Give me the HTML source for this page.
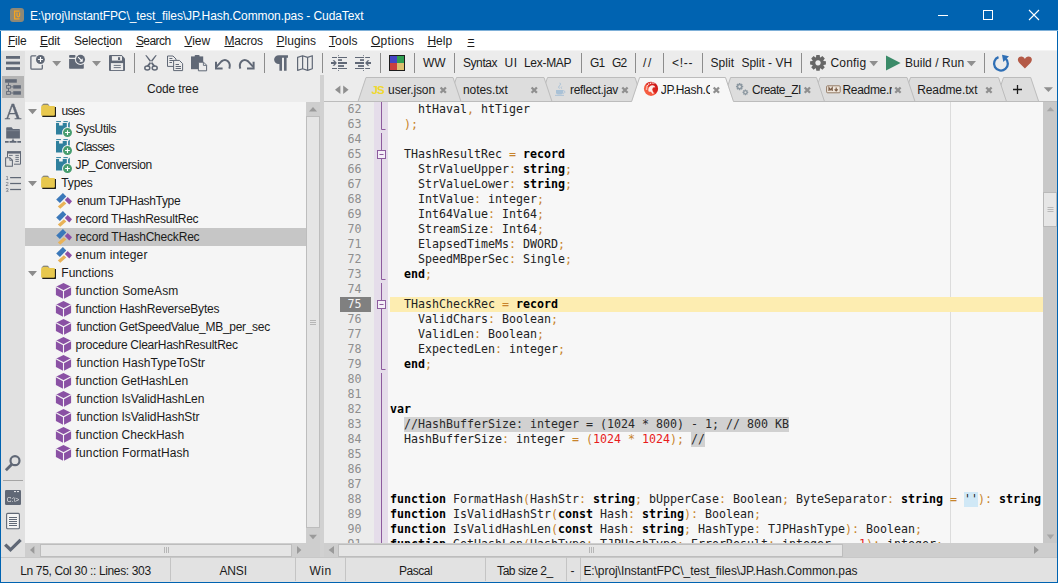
<!DOCTYPE html>
<html lang="en"><head><meta charset="utf-8"><title>E:\proj\InstantFPC\_test_files\JP.Hash.Common.pas - CudaText</title>
<style>

*{box-sizing:border-box;margin:0;padding:0}
html,body{width:1058px;height:583px;overflow:hidden}
body{position:relative;background:#0063b1;font-family:"Liberation Sans",sans-serif;font-size:12px;color:#1b1b1b}
.a{position:absolute}
.t{position:absolute;white-space:pre;line-height:14px;height:14px;font-size:12px}
#title{left:0;top:0;width:1058px;height:31px;background:linear-gradient(#0063b1 0,#0063b1 30px,#7fb0d8 30px,#7fb0d8 31px)}
#title .t{color:#fff}
#menu{left:1px;top:31px;width:1056px;height:19px;background:#fff}
#tool{left:1px;top:50px;width:1056px;height:26px;background:linear-gradient(#f8f8f8 0,#ececec 1.5px)}
.sep{position:absolute;width:1px;top:53px;height:20px;background:#8c8c8c}
#side{left:1px;top:51px;width:24px;height:506px;background:#e1e1e1}
#sidesel{left:2px;top:75.5px;width:22px;height:22.5px;background:#b4b4b4}
#treehdr{left:25px;top:76px;width:295px;height:26px;background:#ececec}
#tree{left:25px;top:102px;width:281px;height:441px;background:#f5f5f5}
#treesel{left:25px;top:228px;width:281px;height:18px;background:#c6c6c6}
.sb{position:absolute;background:#cecece}
.th{position:absolute;background:#e5e5e5;border:1px solid #bdbdbd}
#split{left:320px;top:75px;width:4px;height:482px;background:#d1d1d1}
#tabs{left:324px;top:76px;width:733px;height:26px;background:#ececec}
#gut{left:324px;top:102px;width:50px;height:441px;background:#ececec}
#fold{left:374px;top:102px;width:14px;height:441px;background:#e5ddea}
#ed{left:388px;top:102px;width:655px;height:441px;background:#f7f7f7;overflow:hidden}
#cur{left:390px;top:297px;width:653px;height:15px;background:#fdedb1}
#curn{left:340px;top:297px;width:31px;height:15px;background:#808080}
#margin{left:950px;top:102px;width:1px;height:441px;background:#dcdcdc}
#status{left:1px;top:557px;width:1056px;height:24.5px;background:#e2e2e2;border-top:1px solid #c8c8c8}
.ssep{position:absolute;width:1px;top:557px;height:24px;background:#c4c4c4}
.code{position:absolute;left:390px;white-space:pre;font-family:"DejaVu Sans Mono","Liberation Mono",monospace;font-size:11.642px;line-height:15px;height:15px;color:#222}
.ln{position:absolute;left:340px;width:21.5px;text-align:right;white-space:pre;font-family:"DejaVu Sans Mono","Liberation Mono",monospace;font-size:11.642px;line-height:15px;height:15px;color:#8e8e8e}
.code b{color:#000;font-weight:bold}
.code i{font-style:normal;color:#c8842c}
.code u{text-decoration:none;color:#e81c1c}
.code s{text-decoration:none;background:#d1d1d1;color:#2a2a2a;display:inline-block;height:15px;vertical-align:top}
.code em{font-style:normal;background:#d0e8f6;display:inline-block;height:15px;vertical-align:top}

</style></head>
<body>
<div class="a" id="title"><span class="t" id="t1" style="left:29.90px;top:9px;letter-spacing:-0.083px;">E:\proj\InstantFPC\_test_files\JP.Hash.Common.pas - CudaText</span></div>
<div class="a" id="menu"></div>
<span class="t mn" id="t2" style="left:7.90px;top:34px;letter-spacing:-0.215px;"><u>F</u>ile</span><span class="t mn" id="t3" style="left:39.90px;top:34px;letter-spacing:-0.163px;"><u>E</u>dit</span><span class="t mn" id="t4" style="left:73.90px;top:34px;letter-spacing:-0.147px;">Select<u>i</u>on</span><span class="t mn" id="t5" style="left:135.90px;top:34px;letter-spacing:-0.566px;"><u>S</u>earch</span><span class="t mn" id="t6" style="left:184.40px;top:34px;letter-spacing:-0.032px;"><u>V</u>iew</span><span class="t mn" id="t7" style="left:224.40px;top:34px;letter-spacing:-0.129px;"><u>M</u>acros</span><span class="t mn" id="t8" style="left:276.40px;top:34px;letter-spacing:0.057px;"><u>P</u>lugins</span><span class="t mn" id="t9" style="left:328.90px;top:34px;letter-spacing:0.171px;"><u>T</u>ools</span><span class="t mn" id="t10" style="left:370.90px;top:34px;letter-spacing:0.307px;"><u>O</u>ptions</span><span class="t mn" id="t11" style="left:427.40px;top:34px;letter-spacing:0.004px;"><u>H</u>elp</span><span class="t mn" id="t12" style="left:467.40px;top:34px;"><u>=</u></span>
<div class="a" id="tool"></div><div class="a" id="side"></div><div class="a" id="sidesel"></div>
<div class="sep" style="left:134px"></div><div class="sep" style="left:264px"></div><div class="sep" style="left:322px"></div><div class="sep" style="left:380px"></div><div class="sep" style="left:414px"></div><div class="sep" style="left:454px"></div><div class="sep" style="left:581px"></div><div class="sep" style="left:635px"></div><div class="sep" style="left:663px"></div><div class="sep" style="left:702px"></div><div class="sep" style="left:801px"></div><div class="sep" style="left:984px"></div>
<span class="t" id="t13" style="left:422.90px;top:56px;letter-spacing:0.044px;">WW</span><span class="t" id="t14" style="left:462.90px;top:56px;letter-spacing:-0.397px;">Syntax</span><span class="t" id="t15" style="left:504.40px;top:56px;letter-spacing:0.700px;">UI</span><span class="t" id="t16" style="left:523.90px;top:56px;letter-spacing:-0.277px;">Lex-MAP</span><span class="t" id="t17" style="left:589.90px;top:56px;letter-spacing:-0.600px;">G1</span><span class="t" id="t18" style="left:611.90px;top:56px;letter-spacing:-0.600px;">G2</span><span class="t" id="t19" style="left:642.90px;top:56px;letter-spacing:1.800px;">//</span><span class="t" id="t20" style="left:671.90px;top:56px;letter-spacing:0.785px;">&lt;!--</span><span class="t" id="t21" style="left:710.40px;top:56px;letter-spacing:0.089px;">Split</span><span class="t" id="t22" style="left:741.40px;top:56px;">Split - VH</span><span class="t" id="t23" style="left:830.40px;top:56px;letter-spacing:0.203px;">Config</span><span class="t" id="t24" style="left:904.90px;top:56px;letter-spacing:0.050px;">Build / Run</span>
<div class="a" id="treehdr"></div><div class="a" id="tree"></div><div class="a" id="treesel"></div>
<span class="t" id="t25" style="left:146.90px;top:82px;letter-spacing:-0.125px;">Code tree</span><span class="t" id="t26" style="left:61.40px;top:104px;letter-spacing:-0.600px;">uses</span>
<span class="t" id="t27" style="left:75.60px;top:122px;letter-spacing:-0.335px;">SysUtils</span>
<span class="t" id="t28" style="left:75.60px;top:140px;letter-spacing:-0.600px;">Classes</span>
<span class="t" id="t29" style="left:75.60px;top:158px;letter-spacing:-0.398px;">JP_Conversion</span>
<span class="t" id="t30" style="left:61.30px;top:176px;letter-spacing:-0.129px;">Types</span>
<span class="t" id="t31" style="left:76.90px;top:194px;letter-spacing:-0.320px;">enum TJPHashType</span>
<span class="t" id="t32" style="left:75.60px;top:212px;letter-spacing:-0.241px;">record THashResultRec</span>
<span class="t" id="t33" style="left:75.60px;top:230px;letter-spacing:-0.201px;">record THashCheckRec</span>
<span class="t" id="t34" style="left:75.60px;top:248px;letter-spacing:0.159px;">enum integer</span>
<span class="t" id="t35" style="left:61.30px;top:266px;letter-spacing:0.021px;">Functions</span>
<span class="t" id="t36" style="left:75.60px;top:284px;letter-spacing:0.132px;">function SomeAsm</span>
<span class="t" id="t37" style="left:75.60px;top:302px;letter-spacing:-0.170px;">function HashReverseBytes</span>
<span class="t" id="t38" style="left:76.40px;top:320px;letter-spacing:-0.295px;">function GetSpeedValue_MB_per_sec</span>
<span class="t" id="t39" style="left:75.60px;top:338px;letter-spacing:-0.260px;">procedure ClearHashResultRec</span>
<span class="t" id="t40" style="left:76.40px;top:356px;letter-spacing:0.062px;">function HashTypeToStr</span>
<span class="t" id="t41" style="left:75.60px;top:374px;letter-spacing:-0.008px;">function GetHashLen</span>
<span class="t" id="t42" style="left:76.40px;top:392px;letter-spacing:-0.024px;">function IsValidHashLen</span>
<span class="t" id="t43" style="left:76.40px;top:410px;letter-spacing:-0.029px;">function IsValidHashStr</span>
<span class="t" id="t44" style="left:75.60px;top:428px;letter-spacing:0.065px;">function CheckHash</span>
<span class="t" id="t45" style="left:75.60px;top:446px;letter-spacing:0.128px;">function FormatHash</span>
<div class="sb" style="left:306px;top:102px;width:14px;height:441px"></div><div class="th" style="left:306px;top:116px;width:13.5px;height:412px"></div><div class="sb" style="left:25px;top:543px;width:295px;height:14px"></div><div class="th" style="left:40px;top:543.5px;width:252px;height:13px"></div>
<div class="a" id="split"></div>
<div class="a" id="tabs"></div>
<svg class="a" style="left:0;top:0" width="1058" height="583" viewBox="0 0 1058 583">
<polygon points="995.5,101.5 1003.5,77.5 1030.7,77.5 1038.7,101.5" fill="#dddddd" stroke="#bcbcbc" stroke-width="1"/>
<polygon points="902.5,101.5 910.5,77.5 998.5,77.5 1006.5,101.5" fill="#dddddd" stroke="#bcbcbc" stroke-width="1"/>
<polygon points="812,101.5 820,77.5 907,77.5 915,101.5" fill="#dddddd" stroke="#bcbcbc" stroke-width="1"/>
<polygon points="722.6,101.5 730.6,77.5 816.5,77.5 824.5,101.5" fill="#dddddd" stroke="#bcbcbc" stroke-width="1"/>
<polygon points="539.5,101.5 547.5,77.5 635,77.5 643,101.5" fill="#dddddd" stroke="#bcbcbc" stroke-width="1"/>
<polygon points="448.5,101.5 456.5,77.5 544,77.5 552,101.5" fill="#dddddd" stroke="#bcbcbc" stroke-width="1"/>
<polygon points="358,101.5 366,77.5 453,77.5 461,101.5" fill="#dddddd" stroke="#bcbcbc" stroke-width="1"/>
<rect x="324" y="101" width="733" height="1" fill="#bcbcbc"/>
<polygon points="631.6,102 639.9,77.5 725.2,77.5 733.5,102" fill="#f7f7f7"/>
<polyline points="631.6,101.5 639.6,77.5 725.5,77.5 733.5,101.5" fill="none" stroke="#bcbcbc" stroke-width="1"/>
</svg>
<span class="t" id="t46" style="left:371.40px;top:83px;letter-spacing:-0.900px;font-size:11.5px;color:#efd82e;font-weight:bold;">JS</span><span class="t tb" id="t47" style="left:388.10px;top:83px;letter-spacing:-0.129px;">user.json</span><span class="t tb" id="t48" style="left:462.90px;top:83px;letter-spacing:-0.045px;">notes.txt</span><span class="t tb" id="t49" style="left:570.00px;top:83px;letter-spacing:-0.300px;width:49.7px;overflow:hidden;">reflect.jav</span><span class="t tb" id="t50" style="left:660.80px;top:83px;letter-spacing:-0.300px;width:49.2px;overflow:hidden;">JP.Hash.C</span><span class="t tb" id="t51" style="left:752.00px;top:83px;letter-spacing:-0.500px;width:48.9px;overflow:hidden;">Create_ZI</span><span class="t tb" id="t52" style="left:842.40px;top:83px;letter-spacing:-0.300px;width:49.6px;overflow:hidden;">Readme.r</span><span class="t tb" id="t53" style="left:917.20px;top:83px;letter-spacing:-0.107px;">Readme.txt</span>
<div class="a" id="gut"></div><div class="a" id="fold"></div>
<div class="sb" style="left:1043px;top:102px;width:14px;height:441px;background:#c8c8c8"></div><div class="th" style="left:1043px;top:192px;width:14px;height:34.5px;border-color:#b9b9b9;background:#e6e6e6"></div><div class="sb" style="left:324px;top:543px;width:733px;height:14px"></div><div class="th" style="left:338px;top:543.5px;width:505px;height:13px"></div>
<div class="a" id="status"></div><div class="ssep" style="left:170px"></div><div class="ssep" style="left:295px"></div><div class="ssep" style="left:345px"></div><div class="ssep" style="left:485px"></div><div class="ssep" style="left:566px"></div><div class="ssep" style="left:580px"></div><span class="t" id="t54" style="left:20.20px;top:564px;letter-spacing:-0.354px;">Ln 75, Col 30 :: Lines: 303</span><span class="t" id="t55" style="left:219.40px;top:564px;letter-spacing:-0.105px;">ANSI</span><span class="t" id="t56" style="left:309.40px;top:564px;letter-spacing:0.514px;">Win</span><span class="t" id="t57" style="left:399.10px;top:564px;letter-spacing:-0.506px;">Pascal</span><span class="t" id="t58" style="left:497.10px;top:564px;letter-spacing:-0.460px;">Tab size 2_</span><span class="t" id="t59" style="left:570.40px;top:564px;">-</span><span class="t" id="t60" style="left:583.40px;top:564px;letter-spacing:-0.064px;">E:\proj\InstantFPC\_test_files\JP.Hash.Common.pas</span>
<div class="a" id="ed"></div><div class="a" id="margin"></div><div class="a" id="cur"></div><div class="a" id="curn"></div>
<div class="a" id="edclip" style="left:324px;top:102px;width:719px;height:441px;overflow:hidden">
<div class="ln" style="top:0px;left:16px">62</div><div class="code" style="top:0px;left:66px">    htHaval<i>,</i> htTiger</div>
<div class="ln" style="top:15px;left:16px">63</div><div class="code" style="top:15px;left:66px">  <i>);</i></div>
<div class="ln" style="top:30px;left:16px">64</div>
<div class="ln" style="top:45px;left:16px">65</div><div class="code" style="top:45px;left:66px">  THashResultRec <i>=</i> <b>record</b></div>
<div class="ln" style="top:60px;left:16px">66</div><div class="code" style="top:60px;left:66px">    StrValueUpper<i>:</i> <b>string</b><i>;</i></div>
<div class="ln" style="top:75px;left:16px">67</div><div class="code" style="top:75px;left:66px">    StrValueLower<i>:</i> <b>string</b><i>;</i></div>
<div class="ln" style="top:90px;left:16px">68</div><div class="code" style="top:90px;left:66px">    IntValue<i>:</i> integer<i>;</i></div>
<div class="ln" style="top:105px;left:16px">69</div><div class="code" style="top:105px;left:66px">    Int64Value<i>:</i> Int64<i>;</i></div>
<div class="ln" style="top:120px;left:16px">70</div><div class="code" style="top:120px;left:66px">    StreamSize<i>:</i> Int64<i>;</i></div>
<div class="ln" style="top:135px;left:16px">71</div><div class="code" style="top:135px;left:66px">    ElapsedTimeMs<i>:</i> DWORD<i>;</i></div>
<div class="ln" style="top:150px;left:16px">72</div><div class="code" style="top:150px;left:66px">    SpeedMBperSec<i>:</i> Single<i>;</i></div>
<div class="ln" style="top:165px;left:16px">73</div><div class="code" style="top:165px;left:66px">  <b>end</b><i>;</i></div>
<div class="ln" style="top:180px;left:16px">74</div>
<div class="ln" style="top:195px;left:16px;color:#f4f4f4">75</div><div class="code" style="top:195px;left:66px">  THashCheckRec <i>=</i> <b>record</b></div>
<div class="ln" style="top:210px;left:16px">76</div><div class="code" style="top:210px;left:66px">    ValidChars<i>:</i> Boolean<i>;</i></div>
<div class="ln" style="top:225px;left:16px">77</div><div class="code" style="top:225px;left:66px">    ValidLen<i>:</i> Boolean<i>;</i></div>
<div class="ln" style="top:240px;left:16px">78</div><div class="code" style="top:240px;left:66px">    ExpectedLen<i>:</i> integer<i>;</i></div>
<div class="ln" style="top:255px;left:16px">79</div><div class="code" style="top:255px;left:66px">  <b>end</b><i>;</i></div>
<div class="ln" style="top:270px;left:16px">80</div>
<div class="ln" style="top:285px;left:16px">81</div>
<div class="ln" style="top:300px;left:16px">82</div><div class="code" style="top:300px;left:66px"><b>var</b></div>
<div class="ln" style="top:315px;left:16px">83</div><div class="code" style="top:315px;left:66px">  <s>//HashBufferSize: integer = (1024 * 800) - 1; // 800 KB</s></div>
<div class="ln" style="top:330px;left:16px">84</div><div class="code" style="top:330px;left:66px">  HashBufferSize<i>:</i> integer <i>=</i> <i>(</i><u>1024</u> <i>*</i> <u>1024</u><i>);</i> <s>//</s></div>
<div class="ln" style="top:345px;left:16px">85</div>
<div class="ln" style="top:360px;left:16px">86</div>
<div class="ln" style="top:375px;left:16px">87</div>
<div class="ln" style="top:390px;left:16px">88</div><div class="code" style="top:390px;left:66px"><b>function</b> FormatHash<i>(</i>HashStr<i>:</i> <b>string</b><i>;</i> bUpperCase<i>:</i> Boolean<i>;</i> ByteSeparator<i>:</i> <b>string</b> <i>=</i> <em>''</em><i>):</i> <b>string</b></div>
<div class="ln" style="top:405px;left:16px">89</div><div class="code" style="top:405px;left:66px"><b>function</b> IsValidHashStr<i>(</i><b>const</b> Hash<i>:</i> <b>string</b><i>):</i> Boolean<i>;</i></div>
<div class="ln" style="top:420px;left:16px">90</div><div class="code" style="top:420px;left:66px"><b>function</b> IsValidHashLen<i>(</i><b>const</b> Hash<i>:</i> <b>string</b><i>;</i> HashType<i>:</i> TJPHashType<i>):</i> Boolean<i>;</i></div>
<div class="ln" style="top:435px;left:16px">91</div><div class="code" style="top:435px;left:66px"><b>function</b> GetHashLen<i>(</i>HashType<i>:</i> TJPHashType<i>;</i> ErrorResult<i>:</i> integer <i>=</i> <i>-</i><u>1</u><i>):</i> integer<i>;</i></div>
</div>
<svg class="a" style="left:0;top:0;pointer-events:none;will-change:transform" width="1058" height="583" viewBox="0 0 1058 583">
<rect x="10" y="8" width="14" height="14" rx="3" fill="#8e8876"/><path d="M19.5,11.2 H14.6 V18.8 H19.5" fill="none" stroke="#f5a31f" stroke-width="1.3"/><path d="M17,12.6 V15.6 Q17,16.8 18.3,16.8 Q19.6,16.8 19.6,15.6 V12.6" fill="none" stroke="#f5a31f" stroke-width="1.2"/><rect x="938" y="15" width="10" height="1" fill="#fff"/><rect x="983.5" y="10.5" width="9" height="9" fill="none" stroke="#fff" stroke-width="1"/><path d="M1029,10 L1039,20 M1039,10 L1029,20" stroke="#fff" stroke-width="1.1" fill="none"/>
<rect x="6" y="56" width="14" height="2.8" fill="#606876"/><rect x="6" y="61.6" width="14" height="2.8" fill="#606876"/><rect x="6" y="67.1" width="14" height="2.8" fill="#606876"/><path d="M36.4,55.8 H31.9 Q30.9,55.8 30.9,56.8 V68.2 Q30.9,69.2 31.9,69.2 H41.3 Q42.3,69.2 42.3,68.2 V64.2" fill="none" stroke="#606876" stroke-width="1.25"/><circle cx="40.4" cy="59.5" r="5.6" fill="#ececec"/><circle cx="40.4" cy="59.5" r="4.45" fill="#606876"/><path d="M38.1,59.5 H42.9 M40.5,57.1 V61.9" stroke="#fff" stroke-width="1.15"/><polygon points="52.2,61 61.2,61 56.7,66.2" fill="#8f8f8f"/><rect x="69.1" y="55.1" width="6.4" height="2.7" rx="0.8" fill="#606876"/><path d="M69.1,59 H83.8 V68 Q83.8,68.7 83.1,68.7 H69.8 Q69.1,68.7 69.1,68 Z" fill="#606876"/><circle cx="80.5" cy="59.4" r="5.6" fill="#ececec"/><circle cx="80.5" cy="59.4" r="4.55" fill="#606876"/><path d="M78.2,57.2 L81.6,60.6" stroke="#fff" stroke-width="1.1" fill="none"/><polygon points="82.7,58.3 82.7,61.7 79.3,61.7" fill="#fff"/><polygon points="92,61 101,61 96.5,66.2" fill="#8f8f8f"/><path d="M110,55 H121.6 L125,58.4 V69.9 Q125,70.9 124,70.9 H110 Q109,70.9 109,69.9 V56 Q109,55 110,55 Z" fill="#606876"/><rect x="111.9" y="56.1" width="10.1" height="4.5" fill="#ececec"/><rect x="118" y="57.2" width="2.1" height="2.8" fill="#606876"/><rect x="110.9" y="63.1" width="12.2" height="7" fill="#ececec"/><path d="M113.7,65.4 H120.8 M113.7,67.6 H120.8" stroke="#606876" stroke-width="0.9"/>
<path d="M145.2,55.3 L146.6,55.3 L155.4,66 L153.6,67 Z M156.8,55.3 L155.4,55.3 L146.6,66 L148.4,67 Z" fill="#606876"/><ellipse cx="147.3" cy="68.1" rx="2.5" ry="2" fill="none" stroke="#606876" stroke-width="1.5"/><ellipse cx="154.7" cy="68.1" rx="2.5" ry="2" fill="none" stroke="#606876" stroke-width="1.5"/><path d="M167.5,56 H173 L176,59 V66.4 H167.5 Z" fill="#ececec" stroke="#606876" stroke-width="1"/><path d="M169.4,58.5 H172.4 M169.4,60.5 H174 M169.4,62.5 H172" stroke="#606876" stroke-width="1"/><path d="M173.6,60.4 H179.4 L182.6,63.6 V70.6 H173.6 Z" fill="#ececec" stroke="#606876" stroke-width="1"/><path d="M175.6,64.5 H179 M175.6,66.5 H181 M175.6,68.5 H181" stroke="#606876" stroke-width="1"/><path d="M191,56.4 H203.2 V69.2 H191 Z" fill="#606876"/><rect x="194.6" y="55" width="5" height="2.4" rx="1" fill="#606876"/><path d="M198.4,62.2 H203.6 L206.6,65.2 V70.8 H198.4 Z" fill="#ececec" stroke="#606876" stroke-width="1"/><path d="M203.4,62.4 V65.4 H206.4" fill="none" stroke="#606876" stroke-width="0.9"/><path d="M229.3,68.6 C231.3,62.4 226.2,57.6 221.4,61.4 L216.6,66.6" fill="none" stroke="#606876" stroke-width="2"/><path d="M216,61.8 V68.6 H222.6" fill="none" stroke="#606876" stroke-width="2"/><path d="M240.3,68.6 C238.3,62.4 243.4,57.6 248.2,61.4 L253,66.6" fill="none" stroke="#606876" stroke-width="2"/><path d="M253.6,61.8 V68.6 H247" fill="none" stroke="#606876" stroke-width="2"/>
<path d="M288,55.2 H278.8 A4.7,4.4 0 0 0 278.8,64 H279.4 V70.7 H282 V57.8 H284 V70.7 H286.6 V57.8 H288 Z" fill="#606876"/><path d="M297.6,57.4 L302.6,55.7 L307.6,57.4 L312.3,55.7 V68.7 L307.6,70.4 L302.6,68.7 L297.6,70.4 Z M302.6,55.7 V68.7 M307.6,57.4 V70.4" fill="none" stroke="#606876" stroke-width="1.2" stroke-linejoin="round"/><path d="M332,57.5 H337 M338,57.5 H347 M332,68.5 H337 M338,68.5 H347" stroke="#606876" stroke-width="1" fill="none"/><rect x="338" y="55.2" width="0.9" height="0.9" fill="#606876"/><rect x="338" y="70" width="0.9" height="0.9" fill="#606876"/><rect x="338" y="59.2" width="4" height="1.7" fill="#606876"/><rect x="338" y="62" width="9" height="2" fill="#606876"/><rect x="338" y="65.1" width="6" height="1.8" fill="#606876"/><path d="M331,62 H334.2 L332.6,60.2 H334.4 L336.9,63 L334.4,65.8 H332.6 L334.2,64 H331 Z" fill="#606876"/><path d="M355,57.5 H364 M365.2,57.5 H370 M355,68.5 H364 M365.2,68.5 H370" stroke="#606876" stroke-width="1" fill="none"/><rect x="363.1" y="55.2" width="0.9" height="0.9" fill="#606876"/><rect x="363.1" y="70" width="0.9" height="0.9" fill="#606876"/><rect x="360" y="59.2" width="4" height="1.7" fill="#606876"/><rect x="355" y="62" width="9" height="2" fill="#606876"/><rect x="358" y="65.1" width="6" height="1.8" fill="#606876"/><path d="M371,62 H367.8 L369.4,60.2 H367.6 L365.1,63 L367.6,65.8 H369.4 L367.8,64 H371 Z" fill="#606876"/>
<rect x="389" y="55" width="16" height="16" fill="#1c1c1c"/><rect x="390" y="56" width="7" height="7" fill="#4444c4"/><rect x="397" y="56" width="7" height="7" fill="#2f9e53"/><rect x="390" y="63" width="7" height="7" fill="#c93f3f"/><rect x="397" y="63" width="7" height="7" fill="#dcc070"/><path d="M825.92,61.21 L825.92,64.59 L823.54,64.92 L823.35,65.39 L824.80,67.31 L822.41,69.70 L820.49,68.25 L820.02,68.44 L819.69,70.82 L816.31,70.82 L815.98,68.44 L815.51,68.25 L813.59,69.70 L811.20,67.31 L812.65,65.39 L812.46,64.92 L810.08,64.59 L810.08,61.21 L812.46,60.88 L812.65,60.41 L811.20,58.49 L813.59,56.10 L815.51,57.55 L815.98,57.36 L816.31,54.98 L819.69,54.98 L820.02,57.36 L820.49,57.55 L822.41,56.10 L824.80,58.49 L823.35,60.41 L823.54,60.88 Z M818.00,60.20 a2.7,2.7 0 1 0 0.01,0 Z" fill="#666666" fill-rule="evenodd"/><polygon points="869.3,61 878.1,61 873.7,66.2" fill="#8f8f8f"/><polygon points="886,55.6 886,70.6 900.6,63.1" fill="#3b8b69"/><polygon points="966.8,61 976,61 971.4,66.2" fill="#8f8f8f"/><path d="M998.5,57.2 A6.9,6.9 0 1 0 1005.4,58.4" fill="none" stroke="#2f6fb5" stroke-width="2.3"/><polygon points="1002,54.8 1009,56.2 1003.3,61.9" fill="#2f6fb5"/><path d="M1024.9,68.5 L1019.4,62.9 C1016.4,59.8 1018.4,56.5 1021.3,56.6 C1023,56.7 1024.3,57.8 1024.9,59 C1025.5,57.8 1026.8,56.7 1028.5,56.6 C1031.4,56.5 1033.4,59.8 1030.4,62.9 Z" fill="#b45a47"/>
<rect x="5.1" y="79.2" width="11.7" height="3.5" fill="#606876"/><rect x="13.2" y="85.2" width="7.7" height="3.4" fill="#606876"/><rect x="13.2" y="91.2" width="7.7" height="3.5" fill="#606876"/><path d="M8.5,82.7 V91.4 M10.8,86.9 H13.2 M10.8,93 H13.2" fill="none" stroke="#606876" stroke-width="0.9"/><rect x="6.6" y="85.6" width="3.8" height="2.6" fill="#b4b4b4" stroke="#606876" stroke-width="0.9"/><rect x="6.6" y="91.6" width="3.8" height="2.7" fill="#b4b4b4" stroke="#606876" stroke-width="0.9"/><text x="13" y="118.6" text-anchor="middle" font-family="Liberation Serif, serif" font-size="23" fill="#606876" stroke="#606876" stroke-width="0.3">A</text><path d="M6.2,128 Q6.2,127.2 7,127.2 H11.6 L13,129 H19.2 Q19.9,129 19.9,129.8 V138.5 H6.2 Z" fill="#606876"/><path d="M6.2,130.7 H19.9" stroke="#8d93a0" stroke-width="0.6"/><path d="M13,138.5 V141" stroke="#606876" stroke-width="1"/><path d="M5,141.9 H8.7 M9.5,141.9 H16.5 M17.3,141.9 H21" stroke="#606876" stroke-width="1.6"/><rect x="11.8" y="140.2" width="2.4" height="1.2" fill="#606876"/><path d="M7.5,153 V157 M20.5,153 V164.2 H14" fill="none" stroke="#606876" stroke-width="1"/><rect x="7" y="151.1" width="14" height="2.5" fill="#606876"/><path d="M15.4,155.4 H18.9 M15.4,157.4 H18.9 M15.4,159.4 H18.9 M15.4,161.4 H18.9 M9,155.4 H12.7" stroke="#606876" stroke-width="0.9"/><path d="M5.6,157.8 H10 L12.4,160.2 V166.3 H5.6 Z" fill="#e1e1e1" stroke="#606876" stroke-width="1.05" stroke-linejoin="round"/><path d="M9.8,158 V160.4 H12.2" fill="none" stroke="#606876" stroke-width="0.8"/><path d="M10.1,177.6 H21" stroke="#606876" stroke-width="1.25"/><text x="5.6" y="179.6" font-family="Liberation Sans, sans-serif" font-size="5.8" fill="#606876">1</text><path d="M10.1,183.5 H21" stroke="#606876" stroke-width="1.25"/><text x="5.6" y="185.5" font-family="Liberation Sans, sans-serif" font-size="5.8" fill="#606876">2</text><path d="M10.1,189.5 H21" stroke="#606876" stroke-width="1.25"/><text x="5.6" y="191.5" font-family="Liberation Sans, sans-serif" font-size="5.8" fill="#606876">3</text><circle cx="15" cy="460.7" r="4.5" fill="none" stroke="#606876" stroke-width="2.2"/><path d="M11.6,464.4 L5.9,470.2" stroke="#606876" stroke-width="2.8"/><rect x="3" y="480" width="20" height="1" fill="#a4a4a4"/><rect x="5" y="490" width="16" height="15" rx="1.2" fill="#606876"/><path d="M14,491.6 H16 M17,491.6 H19" stroke="#fff" stroke-width="0.9"/><text x="13" y="502.4" text-anchor="middle" font-family="Liberation Sans, sans-serif" font-size="6.6" fill="#f2f2f2">C:\&gt;</text><rect x="6.6" y="513.4" width="12.8" height="15.4" rx="1" fill="#f4f4f4" stroke="#606876" stroke-width="1.1"/><path d="M9,517.5 H17 M9,519.5 H17 M9,521.5 H17 M9,523.5 H17 M9,525.5 H17" stroke="#606876" stroke-width="1"/><path d="M5.2,544.6 L10.5,549.8 L20.6,539.8" fill="none" stroke="#606876" stroke-width="3.3"/>
<polygon points="28,108.9 37,108.9 32.5,114.3" fill="#8c8c8c"/><path d="M42.3,107 H55.9 V116.9 H42.3 Z" fill="#050505"/><rect x="41.1" y="105.9" width="13.8" height="9.8" rx="0.9" fill="#e8c84e"/><path d="M41.4,106.6 L43.3,104.2 H47.8 L49.4,106.6 Z" fill="#e8c84e"/><path d="M42,105.6 L43.3,104.2 H47.8 L48.9,105.6" fill="none" stroke="#5c6068" stroke-width="0.9"/>
<path d="M56,123.1 H59.1 V125.6 H62.7 V123.1 H66.8 V134.6 H56 Z" fill="#2f809d"/><path d="M56.2,121.6 H61 M63.4,121.6 H67.8" stroke="#2f809d" stroke-width="1"/><path d="M68.1,123.3 L69.8,121.4 V129.5 H68.1 Z" fill="#2f809d"/><circle cx="67.5" cy="132.6" r="5.5" fill="#f5f5f5"/><circle cx="67.5" cy="132.6" r="4.5" fill="#479d6f"/><path d="M65.1,132.5 H69.9 M67.5,130.2 V135" stroke="#fff" stroke-width="1.1"/>
<path d="M56,141.1 H59.1 V143.6 H62.7 V141.1 H66.8 V152.6 H56 Z" fill="#2f809d"/><path d="M56.2,139.6 H61 M63.4,139.6 H67.8" stroke="#2f809d" stroke-width="1"/><path d="M68.1,141.3 L69.8,139.4 V147.5 H68.1 Z" fill="#2f809d"/><circle cx="67.5" cy="150.6" r="5.5" fill="#f5f5f5"/><circle cx="67.5" cy="150.6" r="4.5" fill="#479d6f"/><path d="M65.1,150.5 H69.9 M67.5,148.2 V153" stroke="#fff" stroke-width="1.1"/>
<path d="M56,159.1 H59.1 V161.6 H62.7 V159.1 H66.8 V170.6 H56 Z" fill="#2f809d"/><path d="M56.2,157.6 H61 M63.4,157.6 H67.8" stroke="#2f809d" stroke-width="1"/><path d="M68.1,159.3 L69.8,157.4 V165.5 H68.1 Z" fill="#2f809d"/><circle cx="67.5" cy="168.6" r="5.5" fill="#f5f5f5"/><circle cx="67.5" cy="168.6" r="4.5" fill="#479d6f"/><path d="M65.1,168.5 H69.9 M67.5,166.2 V171" stroke="#fff" stroke-width="1.1"/>
<polygon points="28,180.9 37,180.9 32.5,186.3" fill="#8c8c8c"/><path d="M42.3,179 H55.9 V188.9 H42.3 Z" fill="#050505"/><rect x="41.1" y="177.9" width="13.8" height="9.8" rx="0.9" fill="#e8c84e"/><path d="M41.4,178.6 L43.3,176.2 H47.8 L49.4,178.6 Z" fill="#e8c84e"/><path d="M42,177.6 L43.3,176.2 H47.8 L48.9,177.6" fill="none" stroke="#5c6068" stroke-width="0.9"/>
<polygon points="62.9,192.9 66.3,196.5 59.9,203 56.2,199.6" fill="#3b78b9"/><polygon points="67.7,196.9 72,201.3 69.3,204.4 64.8,200.1" fill="#8b4fa6"/><polygon points="63.9,201.3 66.3,203.4 60.3,208.7 57.8,206.5" fill="#e9b257"/>
<polygon points="62.9,210.9 66.3,214.5 59.9,221 56.2,217.6" fill="#3b78b9"/><polygon points="67.7,214.9 72,219.3 69.3,222.4 64.8,218.1" fill="#8b4fa6"/><polygon points="63.9,219.3 66.3,221.4 60.3,226.7 57.8,224.5" fill="#e9b257"/>
<polygon points="62.9,228.9 66.3,232.5 59.9,239 56.2,235.6" fill="#3b78b9"/><polygon points="67.7,232.9 72,237.3 69.3,240.4 64.8,236.1" fill="#8b4fa6"/><polygon points="63.9,237.3 66.3,239.4 60.3,244.7 57.8,242.5" fill="#e9b257"/>
<polygon points="62.9,246.9 66.3,250.5 59.9,257 56.2,253.6" fill="#3b78b9"/><polygon points="67.7,250.9 72,255.3 69.3,258.4 64.8,254.1" fill="#8b4fa6"/><polygon points="63.9,255.3 66.3,257.4 60.3,262.7 57.8,260.5" fill="#e9b257"/>
<polygon points="28,270.9 37,270.9 32.5,276.3" fill="#8c8c8c"/><path d="M42.3,269 H55.9 V278.9 H42.3 Z" fill="#050505"/><rect x="41.1" y="267.9" width="13.8" height="9.8" rx="0.9" fill="#e8c84e"/><path d="M41.4,268.6 L43.3,266.2 H47.8 L49.4,268.6 Z" fill="#e8c84e"/><path d="M42,267.6 L43.3,266.2 H47.8 L48.9,267.6" fill="none" stroke="#5c6068" stroke-width="0.9"/>
<polygon points="63.5,282.9 71.1,286.8 71.1,295 63.5,298.9 55.9,295 55.9,286.8" fill="#8a51a4"/><path d="M55.9,286.8 L63.5,290.8 L71.1,286.8 M63.5,290.8 V298.9" fill="none" stroke="#f5f5f5" stroke-width="1.1"/>
<polygon points="63.5,300.9 71.1,304.8 71.1,313 63.5,316.9 55.9,313 55.9,304.8" fill="#8a51a4"/><path d="M55.9,304.8 L63.5,308.8 L71.1,304.8 M63.5,308.8 V316.9" fill="none" stroke="#f5f5f5" stroke-width="1.1"/>
<polygon points="63.5,318.9 71.1,322.8 71.1,331 63.5,334.9 55.9,331 55.9,322.8" fill="#8a51a4"/><path d="M55.9,322.8 L63.5,326.8 L71.1,322.8 M63.5,326.8 V334.9" fill="none" stroke="#f5f5f5" stroke-width="1.1"/>
<polygon points="63.5,336.9 71.1,340.8 71.1,349 63.5,352.9 55.9,349 55.9,340.8" fill="#8a51a4"/><path d="M55.9,340.8 L63.5,344.8 L71.1,340.8 M63.5,344.8 V352.9" fill="none" stroke="#f5f5f5" stroke-width="1.1"/>
<polygon points="63.5,354.9 71.1,358.8 71.1,367 63.5,370.9 55.9,367 55.9,358.8" fill="#8a51a4"/><path d="M55.9,358.8 L63.5,362.8 L71.1,358.8 M63.5,362.8 V370.9" fill="none" stroke="#f5f5f5" stroke-width="1.1"/>
<polygon points="63.5,372.9 71.1,376.8 71.1,385 63.5,388.9 55.9,385 55.9,376.8" fill="#8a51a4"/><path d="M55.9,376.8 L63.5,380.8 L71.1,376.8 M63.5,380.8 V388.9" fill="none" stroke="#f5f5f5" stroke-width="1.1"/>
<polygon points="63.5,390.9 71.1,394.8 71.1,403 63.5,406.9 55.9,403 55.9,394.8" fill="#8a51a4"/><path d="M55.9,394.8 L63.5,398.8 L71.1,394.8 M63.5,398.8 V406.9" fill="none" stroke="#f5f5f5" stroke-width="1.1"/>
<polygon points="63.5,408.9 71.1,412.8 71.1,421 63.5,424.9 55.9,421 55.9,412.8" fill="#8a51a4"/><path d="M55.9,412.8 L63.5,416.8 L71.1,412.8 M63.5,416.8 V424.9" fill="none" stroke="#f5f5f5" stroke-width="1.1"/>
<polygon points="63.5,426.9 71.1,430.8 71.1,439 63.5,442.9 55.9,439 55.9,430.8" fill="#8a51a4"/><path d="M55.9,430.8 L63.5,434.8 L71.1,430.8 M63.5,434.8 V442.9" fill="none" stroke="#f5f5f5" stroke-width="1.1"/>
<polygon points="63.5,444.9 71.1,448.8 71.1,457 63.5,460.9 55.9,457 55.9,448.8" fill="#8a51a4"/><path d="M55.9,448.8 L63.5,452.8 L71.1,448.8 M63.5,452.8 V460.9" fill="none" stroke="#f5f5f5" stroke-width="1.1"/>
<polygon points="309,111.4 317,111.4 313,107" fill="#9a9a9a"/><polygon points="309,534.8 317,534.8 313,539.2" fill="#9a9a9a"/><path d="M310,320.5 H316 M310,322.5 H316 M310,324.5 H316" stroke="#b6b6b6" stroke-width="1"/><polygon points="34.4,546 34.4,554 30,550" fill="#9a9a9a"/><polygon points="297,546 297,554 301.4,550" fill="#9a9a9a"/><path d="M164.5,547 V553 M166.5,547 V553 M168.5,547 V553" stroke="#b6b6b6" stroke-width="1"/><polygon points="1046.8,111.2 1054.2,111.2 1050.5,107" fill="#a6a6a6"/><polygon points="1046.8,534.6 1054.2,534.6 1050.5,539.2" fill="#a6a6a6"/><path d="M1047.5,207.5 H1053.5 M1047.5,209.5 H1053.5 M1047.5,211.5 H1053.5" stroke="#b8b8b8" stroke-width="1"/><polygon points="334,546 334,554 328.6,550" fill="#9a9a9a"/><polygon points="1034,546 1034,554 1038.8,550" fill="#9a9a9a"/><path d="M589.5,547 V553 M591.5,547 V553 M593.5,547 V553" stroke="#b6b6b6" stroke-width="1"/>
<path d="M381.5,102 V117" stroke="#8d5b9e" stroke-width="1"/><path d="M381.5,117 V129.5 H385.5" fill="none" stroke="#8d5b9e" stroke-width="1"/><path d="M381.5,133 V150" stroke="#8d5b9e" stroke-width="1"/><rect x="377.5" y="150.5" width="8" height="8" fill="#f4eef7" stroke="#8d5b9e" stroke-width="1"/><path d="M379.5,154.5 H383.5" stroke="#8d5b9e" stroke-width="1"/><path d="M381.5,159 V267" stroke="#8d5b9e" stroke-width="1"/><path d="M381.5,267 V279.5 H385.5" fill="none" stroke="#8d5b9e" stroke-width="1"/><path d="M381.5,283 V300" stroke="#8d5b9e" stroke-width="1"/><rect x="377.5" y="300.5" width="8" height="8" fill="#f4eef7" stroke="#8d5b9e" stroke-width="1"/><path d="M379.5,304.5 H383.5" stroke="#8d5b9e" stroke-width="1"/><path d="M381.5,309 V357" stroke="#8d5b9e" stroke-width="1"/><path d="M381.5,357 V369.5 H385.5" fill="none" stroke="#8d5b9e" stroke-width="1"/><path d="M381.5,373 V543" stroke="#8d5b9e" stroke-width="1"/>
<path d="M440.6,87.5 L445.9,92.8 M445.9,87.5 L440.6,92.8" stroke="#8f8f8f" stroke-width="2.3"/><path d="M531.6,87.5 L536.9,92.8 M536.9,87.5 L531.6,92.8" stroke="#8f8f8f" stroke-width="2.3"/><path d="M622.3,87.5 L627.6,92.8 M627.6,87.5 L622.3,92.8" stroke="#8f8f8f" stroke-width="2.3"/><path d="M713.7,87.5 L719,92.8 M719,87.5 L713.7,92.8" stroke="#8f8f8f" stroke-width="2.3"/><path d="M804.7,87.5 L810,92.8 M810,87.5 L804.7,92.8" stroke="#8f8f8f" stroke-width="2.3"/><path d="M895.3,87.5 L900.6,92.8 M900.6,87.5 L895.3,92.8" stroke="#8f8f8f" stroke-width="2.3"/><path d="M986.3,87.5 L991.6,92.8 M991.6,87.5 L986.3,92.8" stroke="#8f8f8f" stroke-width="2.3"/><polygon points="340.4,85.4 340.4,94 335,89.7" fill="#8f8f8f"/><polygon points="343.2,85.4 343.2,94 348.6,89.7" fill="#8f8f8f"/><path d="M1013,89.5 H1022 M1017.5,85 V94" stroke="#1b1b1b" stroke-width="1.3"/><polygon points="1043.8,87.2 1053,87.2 1048.4,92" fill="#8f8f8f"/><path d="M556,90 H563 V92.5 Q563,94.6 561,94.6 H558 Q556,94.6 556,92.5 Z" fill="#a9c1d6"/><path d="M563,90.6 Q565.4,90.8 564.8,92.4 Q564.4,93.4 563,93.2" fill="none" stroke="#a9c1d6" stroke-width="0.9"/><path d="M559.4,88.6 Q557.6,87 559.6,85.6 Q561.4,84.2 559.8,82.8 M561.6,88.6 Q560.6,87.6 561.8,86.6" fill="none" stroke="#a9c1d6" stroke-width="1"/><path d="M555,95.4 H564" stroke="#a9c1d6" stroke-width="0.9"/><defs><linearGradient id="rg" x1="1" y1="0" x2="0" y2="1"><stop offset="0" stop-color="#c40f12"/><stop offset="0.5" stop-color="#dd2a22"/><stop offset="0.52" stop-color="#f4523a"/><stop offset="1" stop-color="#f86848"/></linearGradient></defs><circle cx="651" cy="88.8" r="7.1" fill="url(#rg)"/><path d="M646.6,89.6 Q646.4,85 650.2,83.4 Q653.2,82.4 655.2,83.6" fill="none" stroke="#fde4de" stroke-width="1.5" stroke-dasharray="1.1 0.7"/><path d="M648.4,91.2 Q647.8,86.8 651,85.4 Q654.2,84.4 655.4,87.2 L653,87.4 Q651.6,89.2 652.8,91.4 L654,93.6 L652.4,93.8 L651,91.8 Q649.6,92 648.4,91.2 Z" fill="#fdeeea"/><path d="M743.23,85.86 L743.23,87.34 L742.09,87.54 L742.03,87.70 L742.68,88.64 L741.64,89.68 L740.70,89.03 L740.54,89.09 L740.34,90.23 L738.86,90.23 L738.66,89.09 L738.50,89.03 L737.56,89.68 L736.52,88.64 L737.17,87.70 L737.11,87.54 L735.97,87.34 L735.97,85.86 L737.11,85.66 L737.17,85.50 L736.52,84.56 L737.56,83.52 L738.50,84.17 L738.66,84.11 L738.86,82.97 L740.34,82.97 L740.54,84.11 L740.70,84.17 L741.64,83.52 L742.68,84.56 L742.03,85.50 L742.09,85.66 Z M739.60,85.27 a1.33,1.33 0 1 0 0.01,0 Z" fill="#8b97a0" fill-rule="evenodd"/><path d="M748.24,91.72 L748.24,92.88 L747.35,93.04 L747.30,93.16 L747.82,93.90 L747.00,94.72 L746.26,94.20 L746.14,94.25 L745.98,95.14 L744.82,95.14 L744.66,94.25 L744.54,94.20 L743.80,94.72 L742.98,93.90 L743.50,93.16 L743.45,93.04 L742.56,92.88 L742.56,91.72 L743.45,91.56 L743.50,91.44 L742.98,90.70 L743.80,89.88 L744.54,90.40 L744.66,90.35 L744.82,89.46 L745.98,89.46 L746.14,90.35 L746.26,90.40 L747.00,89.88 L747.82,90.70 L747.30,91.44 L747.35,91.56 Z M745.40,91.26 a1.04,1.04 0 1 0 0.01,0 Z" fill="#8b97a0" fill-rule="evenodd"/><rect x="826.6" y="85.8" width="13.6" height="7" rx="1" fill="#efe6dc" stroke="#8a6f58" stroke-width="0.9"/><path d="M829,91 V87.8 L830.6,89.8 L832.2,87.8 V91 M836.2,87.6 V90.8 M834.6,89.4 L836.2,91 L837.8,89.4" fill="none" stroke="#7a5c45" stroke-width="1.2"/>
</svg>

</body></html>
